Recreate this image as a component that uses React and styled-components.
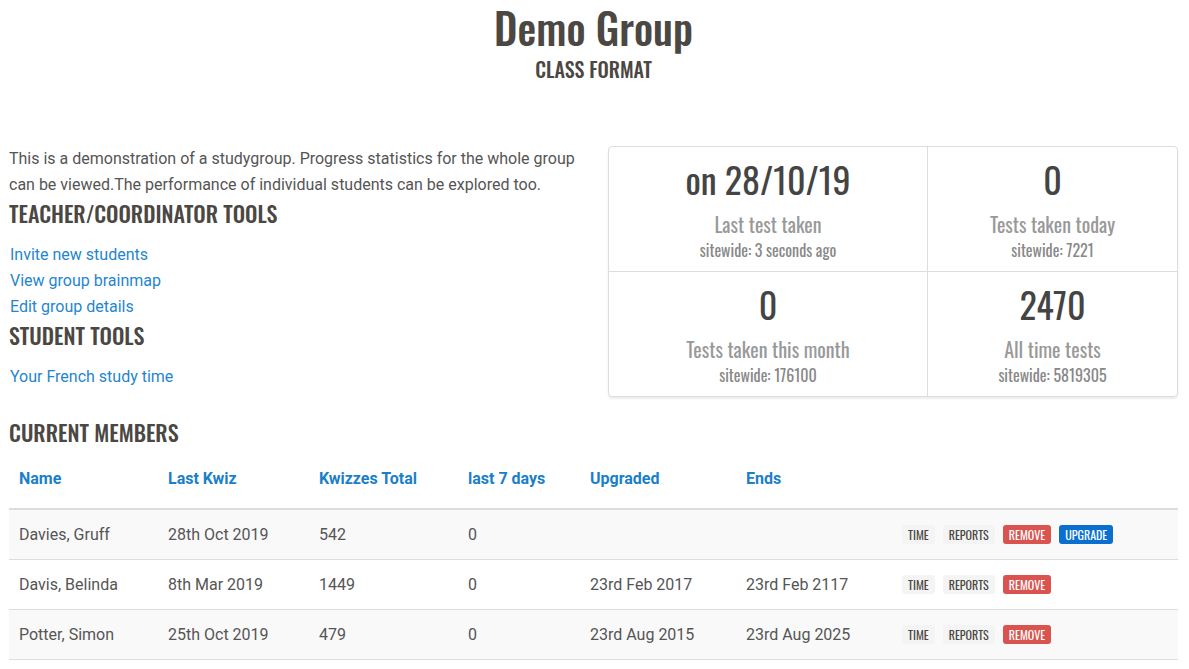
import React from "react";
import styled, { createGlobalStyle } from "styled-components";

const heading = `"Oswald", "Liberation Sans Narrow", "DejaVu Sans Condensed", sans-serif`;

const GlobalStyle = createGlobalStyle`
  body {
    margin: 0;
    background: #fff;
    font-family: Roboto, "Liberation Sans", sans-serif;
    font-size: 16px;
    color: #555;
  }
`;

const Page = styled.div`
  padding: 0 11px 0 9px;
`;

const TitleBlock = styled.header`
  text-align: center;
  color: #4b4743;
  font-family: ${heading};
  padding-top: 4px;
`;

const Title = styled.h1`
  margin: 0;
  font-size: 42px;
  line-height: 46px;
  font-weight: 500;
`;

const Subtitle = styled.h2`
  margin: 7px 0 0;
  font-size: 20px;
  line-height: 24px;
  font-weight: 500;
  text-transform: uppercase;
`;

const TopRow = styled.div`
  display: grid;
  grid-template-columns: 1fr 570px;
  gap: 30px;
  margin-top: 65px;
`;

const Intro = styled.p`
  margin: 0;
  line-height: 26px;
`;

const SectionTitle = styled.h3`
  margin: 0;
  font-family: ${heading};
  font-size: 22px;
  line-height: 30px;
  font-weight: 500;
  color: #4b4743;
  text-transform: uppercase;
`;

const LinkList = styled.div`
  display: flex;
  flex-direction: column;
  margin-top: 14px;
`;

const ToolLink = styled.a`
  color: #1f86cf;
  text-decoration: none;
  line-height: 26px;
  padding-left: 1px;
`;

const StatsBox = styled.div`
  display: grid;
  grid-template-columns: 319px 1fr;
  border: 1px solid #ddd;
  border-radius: 4px;
  box-shadow: 0 2px 2px rgba(0, 0, 0, 0.08);
  align-self: start;
`;

const StatCell = styled.div`
  text-align: center;
  font-family: ${heading};
  padding: 10px 0 8px;
  border-right: ${(p) => (p.$left ? "1px solid #ddd" : "none")};
  border-bottom: ${(p) => (p.$top ? "1px solid #ddd" : "none")};
`;

const StatValue = styled.div`
  font-size: 36px;
  line-height: 44px;
  color: #444;
`;

const StatLabel = styled.div`
  margin-top: 10px;
  font-size: 20px;
  line-height: 26px;
  color: #999;
`;

const StatSub = styled.div`
  font-size: 16px;
  line-height: 26px;
  color: #888;
`;

const MembersTitle = styled(SectionTitle)`
  margin-top: 20px;
`;

const Table = styled.table`
  width: 100%;
  margin-top: 10px;
  border-collapse: collapse;
  table-layout: fixed;
`;

const Th = styled.th`
  text-align: left;
  padding: 12px 10px 19px;
  line-height: 20px;
  color: #1a7fc9;
  font-weight: 700;
  border-bottom: 2px solid #ddd;
`;

const Tr = styled.tr`
  background: ${(p) => (p.$striped ? "#f9f9f9" : "#fff")};
  border-bottom: 1px solid #ddd;
`;

const Td = styled.td`
  padding: 14px 10px;
  line-height: 21px;
  color: #555;
`;

const Actions = styled.div`
  display: flex;
  gap: 8px;
`;

const tones = {
  plain: { bg: "#f4f4f4", fg: "#4b4743" },
  danger: { bg: "#d9534f", fg: "#fff" },
  primary: { bg: "#0b6fd0", fg: "#fff" },
};

const SmallButton = styled.button`
  border: none;
  border-radius: 3px;
  padding: 2px 6px;
  font-family: ${heading};
  font-size: 12px;
  font-weight: 400;
  line-height: 15px;
  text-transform: uppercase;
  background: ${(p) => tones[p.$tone].bg};
  color: ${(p) => tones[p.$tone].fg};
  cursor: pointer;
`;

const stats = [
  { value: "on 28/10/19", label: "Last test taken", sub: "sitewide: 3 seconds ago" },
  { value: "0", label: "Tests taken today", sub: "sitewide: 7221" },
  { value: "0", label: "Tests taken this month", sub: "sitewide: 176100" },
  { value: "2470", label: "All time tests", sub: "sitewide: 5819305" },
];

const members = [
  { name: "Davies, Gruff", last: "28th Oct 2019", total: "542", week: "0", upgraded: "", ends: "", canUpgrade: true },
  { name: "Davis, Belinda", last: "8th Mar 2019", total: "1449", week: "0", upgraded: "23rd Feb 2017", ends: "23rd Feb 2117" },
  { name: "Potter, Simon", last: "25th Oct 2019", total: "479", week: "0", upgraded: "23rd Aug 2015", ends: "23rd Aug 2025" },
];

const columns = [
  { label: "Name", width: 149 },
  { label: "Last Kwiz", width: 151 },
  { label: "Kwizzes Total", width: 149 },
  { label: "last 7 days", width: 122 },
  { label: "Upgraded", width: 156 },
  { label: "Ends", width: 156 },
  { label: "", width: null },
];

export default function App() {
  return (
    <>
      <GlobalStyle />
      <Page>
        <TitleBlock>
          <Title>Demo Group</Title>
          <Subtitle>Class format</Subtitle>
        </TitleBlock>

        <TopRow>
          <div>
            <Intro>
              This is a demonstration of a studygroup. Progress statistics for the whole group
              can be viewed.The performance of individual students can be explored too.
            </Intro>
            <SectionTitle>Teacher/Coordinator tools</SectionTitle>
            <LinkList>
              <ToolLink href="#">Invite new students</ToolLink>
              <ToolLink href="#">View group brainmap</ToolLink>
              <ToolLink href="#">Edit group details</ToolLink>
            </LinkList>
            <SectionTitle>Student tools</SectionTitle>
            <LinkList>
              <ToolLink href="#">Your French study time</ToolLink>
            </LinkList>
          </div>

          <StatsBox>
            {stats.map((s, i) => (
              <StatCell key={i} $left={i % 2 === 0} $top={i < 2}>
                <StatValue>{s.value}</StatValue>
                <StatLabel>{s.label}</StatLabel>
                <StatSub>{s.sub}</StatSub>
              </StatCell>
            ))}
          </StatsBox>
        </TopRow>

        <MembersTitle>Current members</MembersTitle>
        <Table>
          <colgroup>
            {columns.map((c, i) => (
              <col key={i} style={c.width ? { width: c.width } : undefined} />
            ))}
          </colgroup>
          <thead>
            <tr>
              {columns.map((c, i) => (
                <Th key={i}>{c.label}</Th>
              ))}
            </tr>
          </thead>
          <tbody>
            {members.map((m, i) => (
              <Tr key={m.name} $striped={i % 2 === 0}>
                <Td>{m.name}</Td>
                <Td>{m.last}</Td>
                <Td>{m.total}</Td>
                <Td>{m.week}</Td>
                <Td>{m.upgraded}</Td>
                <Td>{m.ends}</Td>
                <Td>
                  <Actions>
                    <SmallButton $tone="plain">Time</SmallButton>
                    <SmallButton $tone="plain">Reports</SmallButton>
                    <SmallButton $tone="danger">Remove</SmallButton>
                    {m.canUpgrade && <SmallButton $tone="primary">Upgrade</SmallButton>}
                  </Actions>
                </Td>
              </Tr>
            ))}
          </tbody>
        </Table>
      </Page>
    </>
  );
}
